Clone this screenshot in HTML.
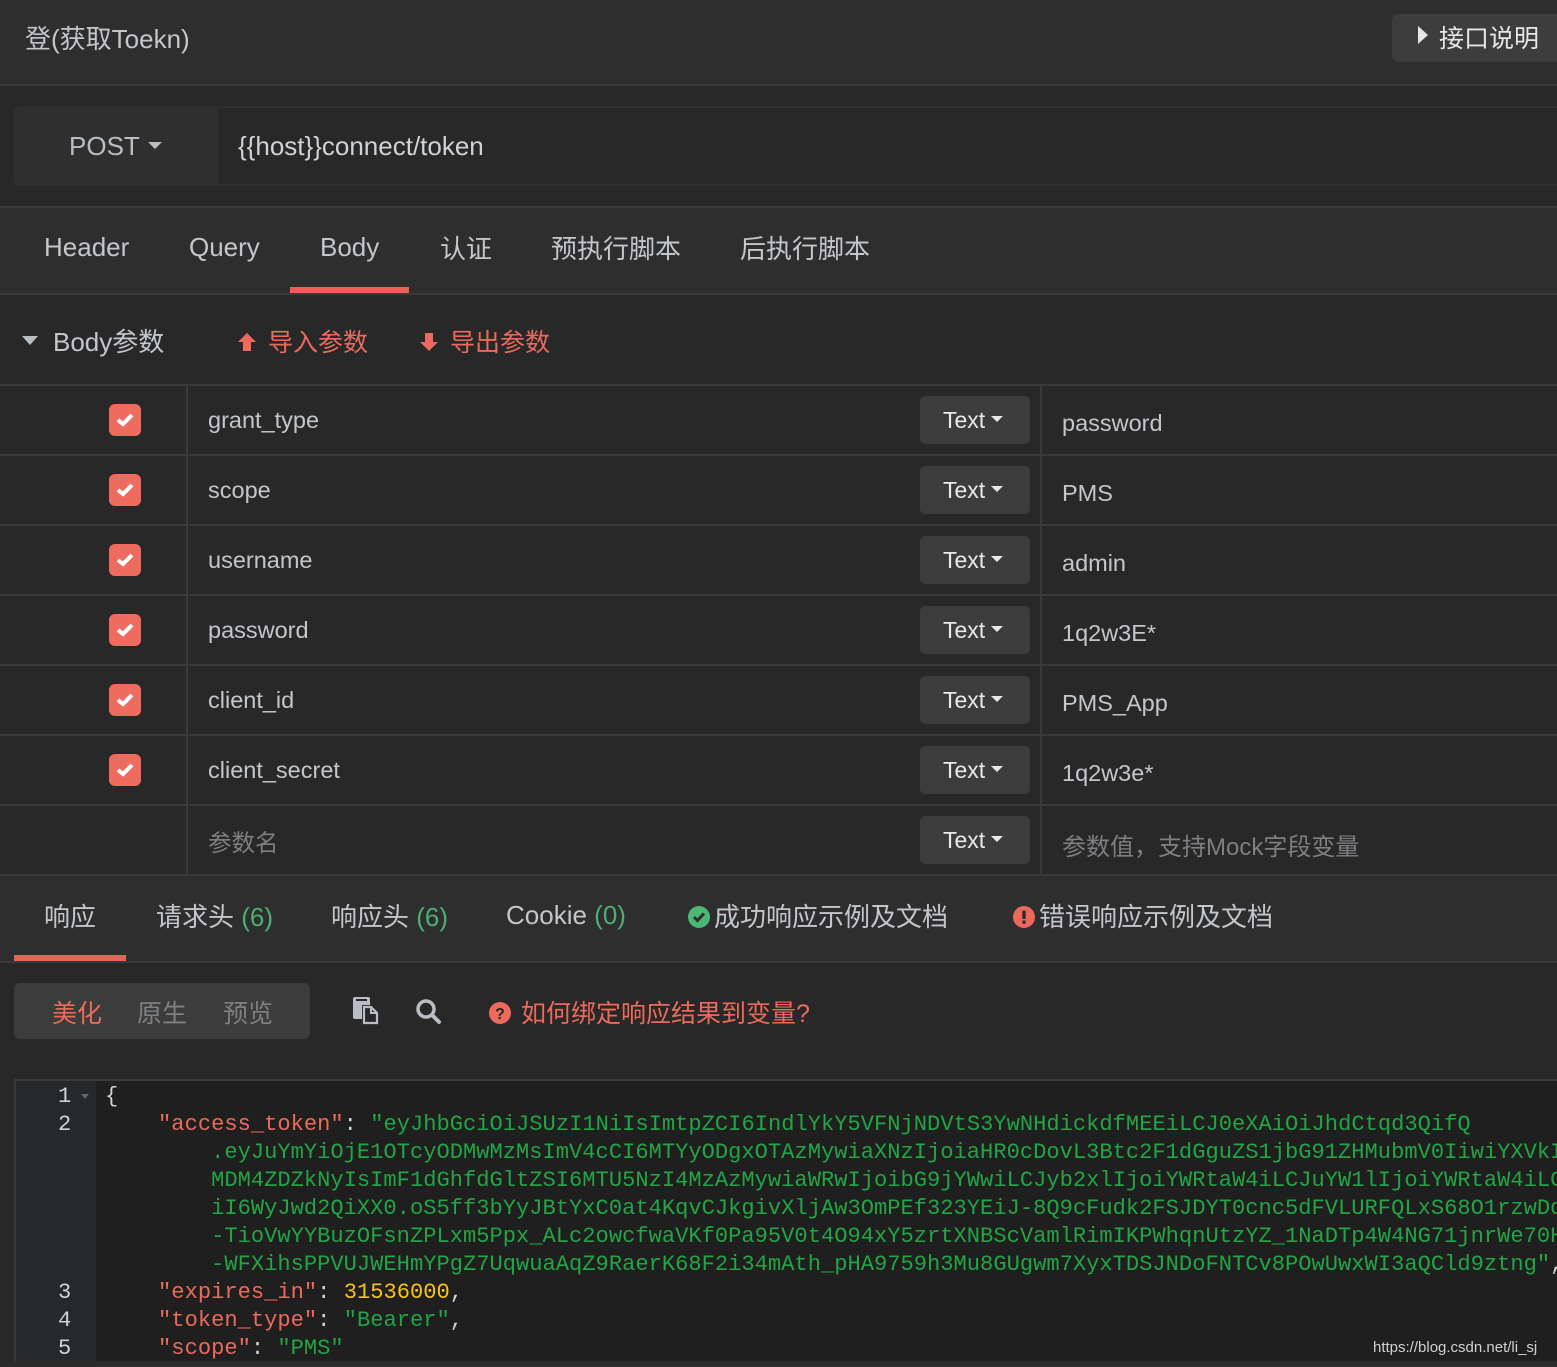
<!DOCTYPE html>
<html><head><meta charset="utf-8"><style>
*{margin:0;padding:0;box-sizing:border-box}
html,body{width:1557px;height:1367px;overflow:hidden}
body{background:#282828;font-family:"Liberation Sans","Noto Sans CJK SC",sans-serif;color:#c3c7cc;position:relative}
.a{position:absolute;white-space:nowrap}
.hl{position:absolute;left:0;width:1557px;height:2px;background:#3a3a3a}
.red{color:#ec6a5c}
.cb{position:absolute;left:109px;width:32px;height:32px;background:#ee6b5f;border-radius:6px}
.cb svg{position:absolute;left:6px;top:7px}
.tb{position:absolute;left:920px;width:110px;height:48px;background:#3c3c3c;border-radius:5px;color:#e6e8ea;font-size:23px;padding:11px 0 0 23px}
.car{display:inline-block;width:0;height:0;border-left:6px solid transparent;border-right:6px solid transparent;border-top:6px solid currentColor;vertical-align:middle;margin-left:6px;position:relative;top:-3px}
.code{font-family:"Liberation Mono",monospace;font-size:22.1px;line-height:28px}
.k{color:#ec6a5c}.s{color:#22a543}.n{color:#f5c518}.p{color:#cfd2d6}
.t{font-size:26px}
</style></head><body>
<div class="a" style="left:0;top:0;width:1557px;height:85px;background:#2e2e2e"></div>
<div class="a" style="left:25px;top:19px;font-size:26px;color:#c3c7cc">登(获取Toekn)</div>
<div class="a" style="left:1392px;top:14px;width:165px;height:48px;background:#3d3d3d;border-radius:6px 0 0 6px"></div>
<div class="a" style="left:1418px;top:26px;width:0;height:0;border-top:9px solid transparent;border-bottom:9px solid transparent;border-left:10px solid #e4e6e8"></div>
<div class="a" style="left:1439px;top:19px;font-size:25px;color:#e4e6e8">接口说明</div>
<div class="hl" style="top:84px"></div>
<div class="a" style="left:14px;top:106px;width:1543px;height:80px;background:#2f2f2f;border-radius:6px 0 0 6px"></div>
<div class="a" style="left:218px;top:108px;width:1339px;height:76px;background:#282828"></div>
<div class="a" style="left:69px;top:131px;font-size:26px;color:#b9bec4">POST<span class="car" style="border-width:7px 7px 0 7px;margin-left:8px"></span></div>
<div class="a" style="left:238px;top:131px;font-size:26px;color:#cfd3d7">{{host}}connect/token</div>
<div class="hl" style="top:206px"></div>
<div class="a" style="left:0;top:208px;width:1557px;height:85px;background:#2e2e2e"></div>
<div class="a t" style="left:44px;top:232px">Header</div>
<div class="a t" style="left:189px;top:232px">Query</div>
<div class="a t" style="left:320px;top:232px">Body</div>
<div class="a t" style="left:440px;top:229px">认证</div>
<div class="a t" style="left:551px;top:229px">预执行脚本</div>
<div class="a t" style="left:740px;top:229px">后执行脚本</div>
<div class="a" style="left:290px;top:287px;width:119px;height:6px;background:#ec6157"></div>
<div class="hl" style="top:293px"></div>
<div class="a" style="left:22px;top:336px;width:0;height:0;border-left:8px solid transparent;border-right:8px solid transparent;border-top:9px solid #b9bec4"></div>
<div class="a t" style="left:53px;top:322px">Body参数</div>
<div class="a red" style="left:236px;top:323px;font-size:25px"><svg width="22" height="22" viewBox="0 0 22 22" style="vertical-align:-2px;margin-right:10px"><path d="M11 2 L20 11 L15 11 L15 20 L7 20 L7 11 L2 11 Z" fill="#ec6a5c"/></svg>导入参数</div>
<div class="a red" style="left:418px;top:323px;font-size:25px"><svg width="22" height="22" viewBox="0 0 22 22" style="vertical-align:-2px;margin-right:10px"><path d="M11 20 L20 11 L15 11 L15 2 L7 2 L7 11 L2 11 Z" fill="#ec6a5c"/></svg>导出参数</div>
<div class="hl" style="top:384px"></div>
<div class="a" style="left:186px;top:386px;width:2px;height:490px;background:#3a3a3a"></div>
<div class="a" style="left:1040px;top:386px;width:2px;height:490px;background:#3a3a3a"></div>

<div class="cb" style="top:404px"><svg width="20" height="18" viewBox="0 0 20 18"><path d="M3 9 L8 13 L17 4" stroke="#fff" stroke-width="4" fill="none"/></svg></div>
<div class="a" style="left:208px;top:407px;font-size:23.5px">grant_type</div>
<div class="tb" style="top:396px">Text<span class="car"></span></div>
<div class="a" style="left:1062px;top:410px;font-size:23.5px">password</div>
<div class="hl" style="top:454px"></div>

<div class="cb" style="top:474px"><svg width="20" height="18" viewBox="0 0 20 18"><path d="M3 9 L8 13 L17 4" stroke="#fff" stroke-width="4" fill="none"/></svg></div>
<div class="a" style="left:208px;top:477px;font-size:23.5px">scope</div>
<div class="tb" style="top:466px">Text<span class="car"></span></div>
<div class="a" style="left:1062px;top:480px;font-size:23.5px">PMS</div>
<div class="hl" style="top:524px"></div>

<div class="cb" style="top:544px"><svg width="20" height="18" viewBox="0 0 20 18"><path d="M3 9 L8 13 L17 4" stroke="#fff" stroke-width="4" fill="none"/></svg></div>
<div class="a" style="left:208px;top:547px;font-size:23.5px">username</div>
<div class="tb" style="top:536px">Text<span class="car"></span></div>
<div class="a" style="left:1062px;top:550px;font-size:23.5px">admin</div>
<div class="hl" style="top:594px"></div>

<div class="cb" style="top:614px"><svg width="20" height="18" viewBox="0 0 20 18"><path d="M3 9 L8 13 L17 4" stroke="#fff" stroke-width="4" fill="none"/></svg></div>
<div class="a" style="left:208px;top:617px;font-size:23.5px">password</div>
<div class="tb" style="top:606px">Text<span class="car"></span></div>
<div class="a" style="left:1062px;top:620px;font-size:23.5px">1q2w3E*</div>
<div class="hl" style="top:664px"></div>

<div class="cb" style="top:684px"><svg width="20" height="18" viewBox="0 0 20 18"><path d="M3 9 L8 13 L17 4" stroke="#fff" stroke-width="4" fill="none"/></svg></div>
<div class="a" style="left:208px;top:687px;font-size:23.5px">client_id</div>
<div class="tb" style="top:676px">Text<span class="car"></span></div>
<div class="a" style="left:1062px;top:690px;font-size:23.5px">PMS_App</div>
<div class="hl" style="top:734px"></div>

<div class="cb" style="top:754px"><svg width="20" height="18" viewBox="0 0 20 18"><path d="M3 9 L8 13 L17 4" stroke="#fff" stroke-width="4" fill="none"/></svg></div>
<div class="a" style="left:208px;top:757px;font-size:23.5px">client_secret</div>
<div class="tb" style="top:746px">Text<span class="car"></span></div>
<div class="a" style="left:1062px;top:760px;font-size:23.5px">1q2w3e*</div>
<div class="hl" style="top:804px"></div>

<div class="a" style="left:208px;top:824px;font-size:23.5px;color:#7d7f82">参数名</div>
<div class="tb" style="top:816px">Text<span class="car"></span></div>
<div class="a" style="left:1062px;top:827px;font-size:24px;color:#7d7f82">参数值，支持Mock字段变量</div>
<div class="hl" style="top:874px"></div>
<div class="a" style="left:0;top:876px;width:1557px;height:85px;background:#2e2e2e"></div>
<div class="a t" style="left:44px;top:897px">响应</div>
<div class="a t" style="left:156px;top:897px">请求头 <span style="color:#4caf72">(6)</span></div>
<div class="a t" style="left:331px;top:897px">响应头 <span style="color:#4caf72">(6)</span></div>
<div class="a t" style="left:506px;top:900px">Cookie <span style="color:#4caf72">(0)</span></div>
<div class="a t" style="left:688px;top:897px"><svg width="22" height="22" viewBox="0 0 22 22" style="vertical-align:-2px;margin-right:4px"><circle cx="11" cy="11" r="11" fill="#4cb774"/><path d="M6 11 L9.5 14.5 L16 7.5" stroke="#2e2e2e" stroke-width="3" fill="none"/></svg>成功响应示例及文档</div>
<div class="a t" style="left:1013px;top:897px"><svg width="22" height="22" viewBox="0 0 22 22" style="vertical-align:-2px;margin-right:4px"><circle cx="11" cy="11" r="11" fill="#ec6a5c"/><rect x="9.3" y="4.5" width="3.4" height="8.5" fill="#2e2e2e"/><rect x="9.3" y="14.5" width="3.4" height="3.2" fill="#2e2e2e"/></svg>错误响应示例及文档</div>
<div class="a" style="left:14px;top:955px;width:112px;height:6px;background:#ec6157"></div>
<div class="hl" style="top:961px"></div>
<div class="a" style="left:14px;top:983px;width:296px;height:56px;background:#3c3c3c;border-radius:6px"></div>
<div class="a red" style="left:52px;top:994px;font-size:25px">美化</div>
<div class="a" style="left:137px;top:994px;font-size:25px;color:#7e8184">原生</div>
<div class="a" style="left:223px;top:994px;font-size:25px;color:#7e8184">预览</div>
<svg class="a" style="left:352px;top:996px" width="30" height="30" viewBox="0 0 30 30"><rect x="1" y="1" width="17" height="22" rx="2" fill="#b9bec4"/><rect x="4" y="3" width="11" height="2" fill="#282828"/><path d="M10 9 L20 9 L27 16 L27 29 L10 29 Z" fill="#282828"/><path d="M12 11 L19 11 L25 17 L25 27 L12 27 Z" fill="none" stroke="#b9bec4" stroke-width="2.2"/><path d="M19 11 L19 17 L25 17" fill="none" stroke="#b9bec4" stroke-width="2"/></svg>
<svg class="a" style="left:414px;top:997px" width="28" height="28" viewBox="0 0 28 28"><circle cx="12" cy="12" r="8" fill="none" stroke="#b9bec4" stroke-width="3.5"/><path d="M18 18 L25 25" stroke="#b9bec4" stroke-width="4" stroke-linecap="round"/></svg>
<div class="a red" style="left:489px;top:994px;font-size:25px"><svg width="22" height="22" viewBox="0 0 22 22" style="vertical-align:-2px;margin-right:10px"><circle cx="11" cy="11" r="11" fill="#ec6a5c"/><text x="11" y="17" text-anchor="middle" font-size="16" font-weight="bold" fill="#282828" font-family="Liberation Sans">?</text></svg>如何绑定响应结果到变量?</div>
<div class="a" style="left:14px;top:1079px;width:1543px;height:288px;background:#1f1f1f;border:2px solid #3a3a3a;border-right:none;overflow:hidden">
<div class="a" style="left:0;top:0;width:80px;height:282px;background:#26282b"></div>
<div class="a code p" style="left:42px;top:2px">1</div>
<div class="a" style="left:65px;top:13px;width:0;height:0;border-left:4px solid transparent;border-right:4px solid transparent;border-top:5px solid #666"></div>
<div class="a code p" style="left:42px;top:30px">2</div>
<div class="a code p" style="left:42px;top:198px">3</div>
<div class="a code p" style="left:42px;top:226px">4</div>
<div class="a code p" style="left:42px;top:254px">5</div>
<div class="a code" style="left:89px;top:2px;white-space:pre"><span class="p">{</span>
    <span class="k">"access_token"</span><span class="p">: </span><span class="s">"eyJhbGciOiJSUzI1NiIsImtpZCI6IndlYkY5VFNjNDVtS3YwNHdickdfMEEiLCJ0eXAiOiJhdCtqd3QifQ</span>
<span class="s">        .eyJuYmYiOjE1OTcyODMwMzMsImV4cCI6MTYyODgxOTAzMywiaXNzIjoiaHR0cDovL3Btc2F1dGguZS1jbG91ZHMubmV0IiwiYXVkIjoiUE1TIiwiY2xp</span>
<span class="s">        MDM4ZDZkNyIsImF1dGhfdGltZSI6MTU5NzI4MzAzMywiaWRwIjoibG9jYWwiLCJyb2xlIjoiYWRtaW4iLCJuYW1lIjoiYWRtaW4iLCJzY29wZSI6</span>
<span class="s">        iI6WyJwd2QiXX0.oS5ff3bYyJBtYxC0at4KqvCJkgivXljAw3OmPEf323YEiJ-8Q9cFudk2FSJDYT0cnc5dFVLURFQLxS68O1rzwDdd</span>
<span class="s">        -TioVwYYBuzOFsnZPLxm5Ppx_ALc2owcfwaVKf0Pa95V0t4O94xY5zrtXNBScVamlRimIKPWhqnUtzYZ_1NaDTp4W4NG71jnrWe70Hz</span>
<span class="s">        -WFXihsPPVUJWEHmYPgZ7UqwuaAqZ9RaerK68F2i34mAth_pHA9759h3Mu8GUgwm7XyxTDSJNDoFNTCv8POwUwxWI3aQCld9ztng"</span><span class="p">,</span>
    <span class="k">"expires_in"</span><span class="p">: </span><span class="n">31536000</span><span class="p">,</span>
    <span class="k">"token_type"</span><span class="p">: </span><span class="s">"Bearer"</span><span class="p">,</span>
    <span class="k">"scope"</span><span class="p">: </span><span class="s">"PMS"</span></div>
</div>
<div class="a" style="left:0;top:1361px;width:1557px;height:6px;background:#2b2b2b"></div>
<div class="a" style="left:1373px;top:1339px;font-size:15px;color:#d0d0d0">https://blog.csdn.net/li_sj</div>
</body></html>
